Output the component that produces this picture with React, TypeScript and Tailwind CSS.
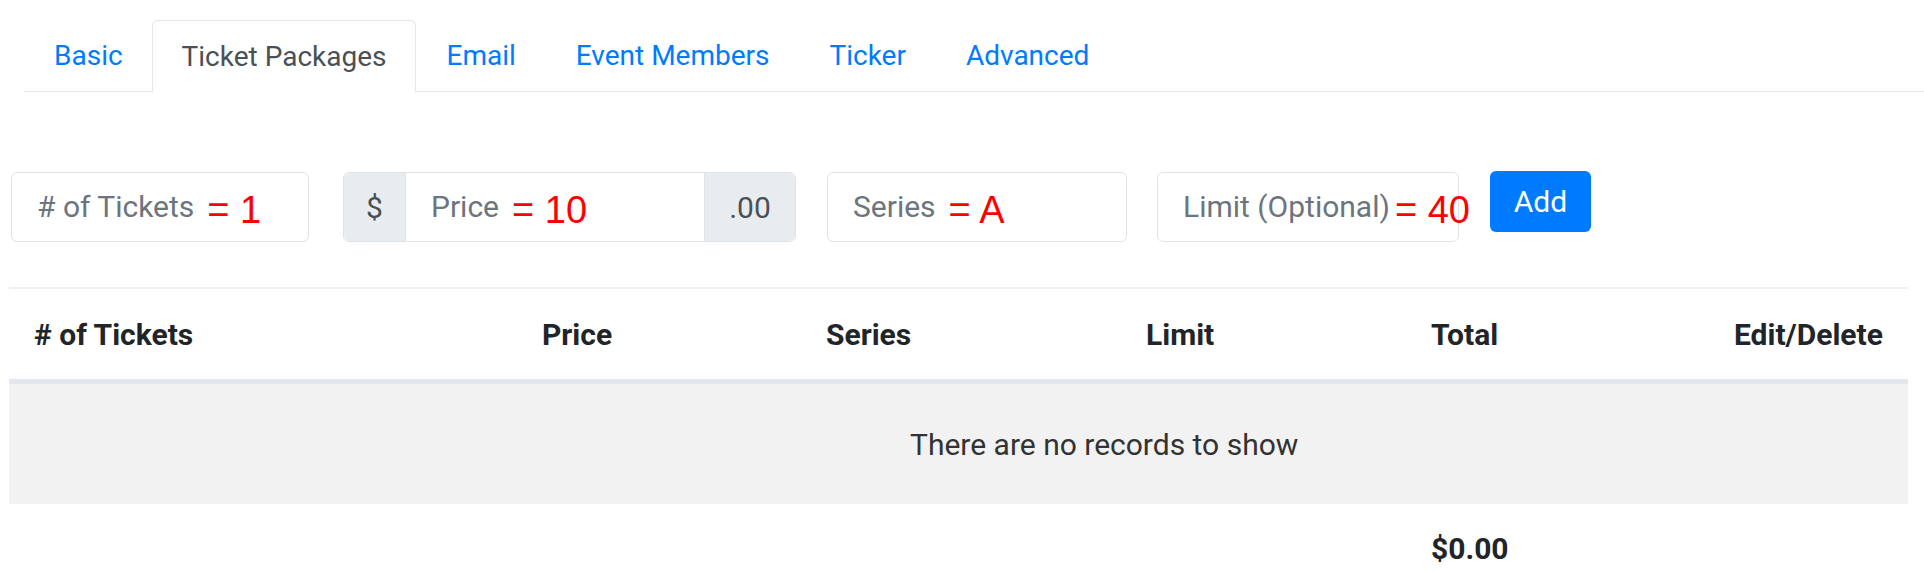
import React from "react";

const tabs = ["Basic", "Ticket Packages", "Email", "Event Members", "Ticker", "Advanced"];

function Field({
  width,
  placeholder,
  red,
  gap = true,
}: {
  width: string;
  placeholder: string;
  red: string;
  gap?: boolean;
}) {
  return (
    <div
      className={`${width} h-[70px] border border-[#dfe3e7] rounded-[6px] bg-white flex items-center pl-[25px] whitespace-nowrap`}
    >
      <span className="text-[30px] text-[#6c757d] leading-none">{placeholder}</span>
      <span
        className={`${gap ? "ml-[13px]" : "ml-[5px]"} text-[38px] text-[#ff0000] leading-none font-['Liberation_Sans',sans-serif] translate-y-[3px]`}
      >
        {red}
      </span>
    </div>
  );
}

export default function App() {
  return (
    <div className="w-[1924px] h-[573px] bg-white overflow-hidden font-['Roboto',sans-serif] text-[#212529]">
      {/* Tabs */}
      <div className="pt-[20px] pl-[24px]">
        <div className="flex border-b border-[#e3e6ea] h-[72px]">
          {tabs.map((t) => {
            const active = t === "Ticket Packages";
            return (
              <div
                key={t}
                className={
                  active
                    ? "px-[29px] h-[73px] flex items-center text-[28px] text-[#495057] bg-white border border-[#e3e6ea] border-b-white rounded-t-[6px] -ml-px"
                    : "px-[30px] h-[72px] flex items-center text-[28px] text-[#007bff]"
                }
              >
                {t}
              </div>
            );
          })}
        </div>
      </div>

      {/* Form row */}
      <div className="flex items-start mt-[80px] pl-[11px]">
        <Field width="w-[298px]" placeholder="# of Tickets" red="= 1" />
        <div className="ml-[34px] w-[453px] h-[70px] flex border border-[#dfe3e7] rounded-[6px] overflow-visible">
          <div className="w-[62px] h-full bg-[#e9ecef] border-r border-[#dfe3e7] rounded-l-[6px] flex items-center justify-center text-[30px] text-[#495057]">
            $
          </div>
          <div className="flex-1 h-full flex items-center pl-[25px] whitespace-nowrap">
            <span className="text-[30px] text-[#6c757d] leading-none">Price</span>
            <span className="ml-[13px] text-[38px] text-[#ff0000] leading-none font-['Liberation_Sans',sans-serif] translate-y-[3px]">
              = 10
            </span>
          </div>
          <div className="w-[91px] h-full bg-[#e9ecef] border-l border-[#dfe3e7] rounded-r-[6px] flex items-center justify-center text-[30px] text-[#495057]">
            .00
          </div>
        </div>
        <div className="ml-[31px]">
          <Field width="w-[300px]" placeholder="Series" red="= A" />
        </div>
        <div className="ml-[30px]">
          <Field width="w-[302px]" placeholder="Limit (Optional)" red="= 40" gap={false} />
        </div>
        <button className="ml-[31px] w-[101px] h-[61px] -mt-px bg-[#007bff] text-white text-[30px] rounded-[6px] flex items-center justify-center">
          Add
        </button>
      </div>

      {/* Table */}
      <div className="ml-[9px] w-[1899px] mt-[45px]">
        <div className="border-t-2 border-[#eef0f2]">
          <div className="grid grid-cols-[508px_284px_320px_285px_303px_199px] h-[95px] items-center border-b-[5px] border-[#e3e6ea] font-bold text-[30px] text-[#212529]">
            <div className="pl-[25px]"># of Tickets</div>
            <div className="pl-[25px]">Price</div>
            <div className="pl-[25px]">Series</div>
            <div className="pl-[25px]">Limit</div>
            <div className="pl-[25px]">Total</div>
            <div className="pl-[25px]">Edit/Delete</div>
          </div>
          <div className="h-[120px] bg-[#f2f2f2] flex items-center">
            <span className="ml-[901px] text-[30px] text-[#333]">There are no records to show</span>
          </div>
          <div className="grid grid-cols-[508px_284px_320px_285px_303px_199px] h-[88px] items-center">
            <div />
            <div />
            <div />
            <div />
            <div className="pl-[25px] font-bold text-[30px] text-[#212529]">$0.00</div>
            <div />
          </div>
        </div>
      </div>
    </div>
  );
}
